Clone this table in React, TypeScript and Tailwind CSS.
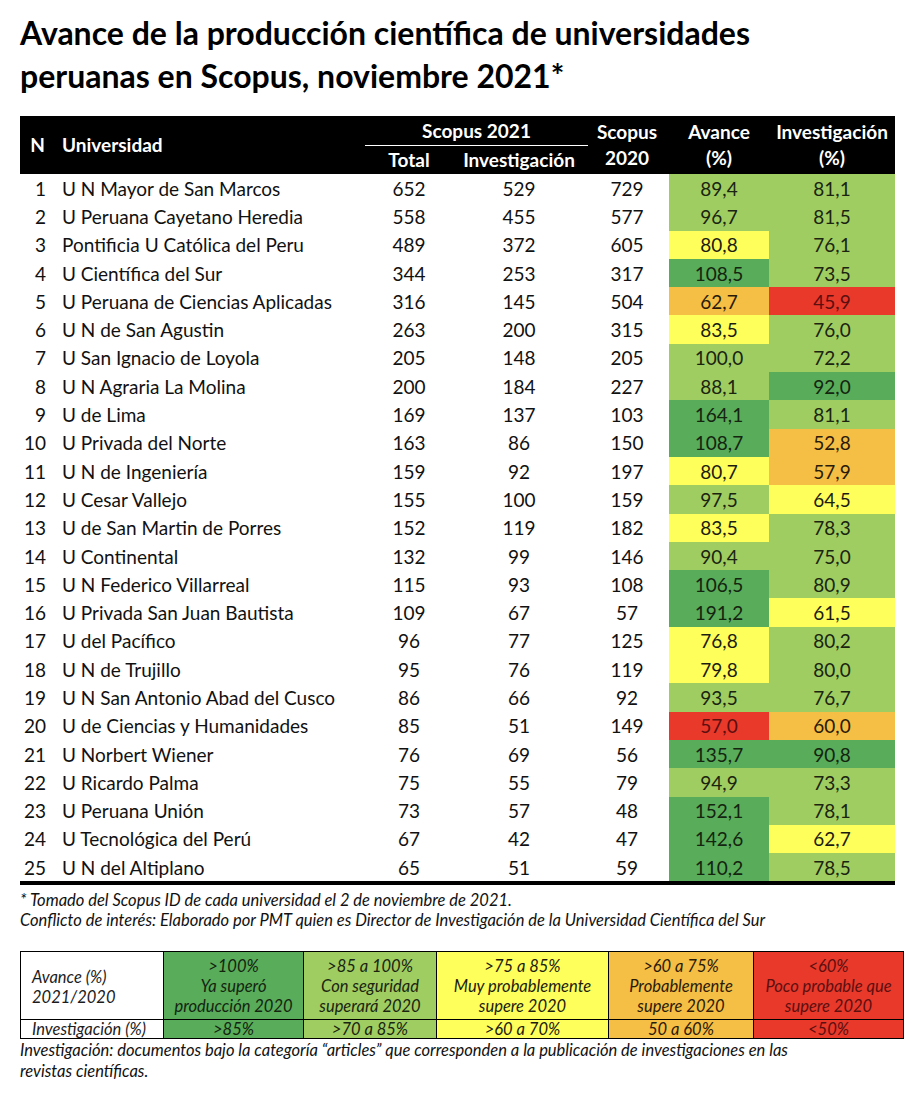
import React from 'react';

type Tone = 'dg' | 'lg' | 'y' | 'o' | 'r';

type Row = {
    n: number;
    name: string;
    total: number;
    inv: number;
    s2020: number;
    avance: string;
    avTone: Tone;
    pct: string;
    pctTone: Tone;
};

const toneClass: Record<Tone, string> = {
    dg: 'bg-[#58ac5a] text-[#14240f]',
    lg: 'bg-[#9fcd62] text-[#1a2410]',
    y: 'bg-[#ffff5c] text-[#1c1c10]',
    o: 'bg-[#f5be45] text-[#2a1a08]',
    r: 'bg-[#e8392b] text-[#5c0f0f]',
};

const rows: Row[] = [
    { n: 1, name: 'U N Mayor de San Marcos', total: 652, inv: 529, s2020: 729, avance: '89,4', avTone: 'lg', pct: '81,1', pctTone: 'lg' },
    { n: 2, name: 'U Peruana Cayetano Heredia', total: 558, inv: 455, s2020: 577, avance: '96,7', avTone: 'lg', pct: '81,5', pctTone: 'lg' },
    { n: 3, name: 'Pontificia U Católica del Peru', total: 489, inv: 372, s2020: 605, avance: '80,8', avTone: 'y', pct: '76,1', pctTone: 'lg' },
    { n: 4, name: 'U Científica del Sur', total: 344, inv: 253, s2020: 317, avance: '108,5', avTone: 'dg', pct: '73,5', pctTone: 'lg' },
    { n: 5, name: 'U Peruana de Ciencias Aplicadas', total: 316, inv: 145, s2020: 504, avance: '62,7', avTone: 'o', pct: '45,9', pctTone: 'r' },
    { n: 6, name: 'U N de San Agustin', total: 263, inv: 200, s2020: 315, avance: '83,5', avTone: 'y', pct: '76,0', pctTone: 'lg' },
    { n: 7, name: 'U San Ignacio de Loyola', total: 205, inv: 148, s2020: 205, avance: '100,0', avTone: 'lg', pct: '72,2', pctTone: 'lg' },
    { n: 8, name: 'U N Agraria La Molina', total: 200, inv: 184, s2020: 227, avance: '88,1', avTone: 'lg', pct: '92,0', pctTone: 'dg' },
    { n: 9, name: 'U de Lima', total: 169, inv: 137, s2020: 103, avance: '164,1', avTone: 'dg', pct: '81,1', pctTone: 'lg' },
    { n: 10, name: 'U Privada del Norte', total: 163, inv: 86, s2020: 150, avance: '108,7', avTone: 'dg', pct: '52,8', pctTone: 'o' },
    { n: 11, name: 'U N de Ingeniería', total: 159, inv: 92, s2020: 197, avance: '80,7', avTone: 'y', pct: '57,9', pctTone: 'o' },
    { n: 12, name: 'U Cesar Vallejo', total: 155, inv: 100, s2020: 159, avance: '97,5', avTone: 'lg', pct: '64,5', pctTone: 'y' },
    { n: 13, name: 'U de San Martin de Porres', total: 152, inv: 119, s2020: 182, avance: '83,5', avTone: 'y', pct: '78,3', pctTone: 'lg' },
    { n: 14, name: 'U Continental', total: 132, inv: 99, s2020: 146, avance: '90,4', avTone: 'lg', pct: '75,0', pctTone: 'lg' },
    { n: 15, name: 'U N Federico Villarreal', total: 115, inv: 93, s2020: 108, avance: '106,5', avTone: 'dg', pct: '80,9', pctTone: 'lg' },
    { n: 16, name: 'U Privada San Juan Bautista', total: 109, inv: 67, s2020: 57, avance: '191,2', avTone: 'dg', pct: '61,5', pctTone: 'y' },
    { n: 17, name: 'U del Pacífico', total: 96, inv: 77, s2020: 125, avance: '76,8', avTone: 'y', pct: '80,2', pctTone: 'lg' },
    { n: 18, name: 'U N de Trujillo', total: 95, inv: 76, s2020: 119, avance: '79,8', avTone: 'y', pct: '80,0', pctTone: 'lg' },
    { n: 19, name: 'U N San Antonio Abad del Cusco', total: 86, inv: 66, s2020: 92, avance: '93,5', avTone: 'lg', pct: '76,7', pctTone: 'lg' },
    { n: 20, name: 'U de Ciencias y Humanidades', total: 85, inv: 51, s2020: 149, avance: '57,0', avTone: 'r', pct: '60,0', pctTone: 'o' },
    { n: 21, name: 'U Norbert Wiener', total: 76, inv: 69, s2020: 56, avance: '135,7', avTone: 'dg', pct: '90,8', pctTone: 'dg' },
    { n: 22, name: 'U Ricardo Palma', total: 75, inv: 55, s2020: 79, avance: '94,9', avTone: 'lg', pct: '73,3', pctTone: 'lg' },
    { n: 23, name: 'U Peruana Unión', total: 73, inv: 57, s2020: 48, avance: '152,1', avTone: 'dg', pct: '78,1', pctTone: 'lg' },
    { n: 24, name: 'U Tecnológica del Perú', total: 67, inv: 42, s2020: 47, avance: '142,6', avTone: 'dg', pct: '62,7', pctTone: 'y' },
    { n: 25, name: 'U N del Altiplano', total: 65, inv: 51, s2020: 59, avance: '110,2', avTone: 'dg', pct: '78,5', pctTone: 'lg' },
];

const cols = 'grid grid-cols-[30px_328px_62px_158px_58px_13px_100px_126px]';

const legend: { tone: Tone; lines: string[]; inv: string; w: string }[] = [
    { tone: 'dg', lines: ['>100%', 'Ya superó', 'producción 2020'], inv: '>85%', w: 'w-[140px]' },
    { tone: 'lg', lines: ['>85 a 100%', 'Con seguridad', 'superará 2020'], inv: '>70 a 85%', w: 'w-[133px]' },
    { tone: 'y', lines: ['>75 a 85%', 'Muy probablemente', 'supere 2020'], inv: '>60 a 70%', w: 'w-[172px]' },
    { tone: 'o', lines: ['>60 a 75%', 'Probablemente', 'supere 2020'], inv: '50 a 60%', w: 'w-[145px]' },
    { tone: 'r', lines: ['<60%', 'Poco probable que', 'supere 2020'], inv: '<50%', w: 'w-[150px]' },
];

function TableHeader() {
    return (
        <div className={`${cols} grid-rows-[30px_28px] h-[58px] bg-black text-white font-bold text-[19px] leading-[26px]`}>
            <div className="row-span-2 flex items-center justify-end pr-[5px]">N</div>
            <div className="row-span-2 flex items-center pl-[12px]">Universidad</div>
            <div className="col-span-2 flex items-center justify-center">
                <div className="ml-[-13px] mr-[10px] w-[223px] h-[30px] border-b border-white flex items-center justify-center">
                    Scopus 2021
                </div>
            </div>
            <div className="row-span-2 flex flex-col items-center justify-center">
                <span>Scopus</span>
                <span>2020</span>
            </div>
            <div className="row-span-2" />
            <div className="row-span-2 flex flex-col items-center justify-center">
                <span>Avance</span>
                <span>(%)</span>
            </div>
            <div className="row-span-2 flex flex-col items-center justify-center">
                <span>Investigación</span>
                <span>(%)</span>
            </div>
            <div className="flex items-center justify-center">Total</div>
            <div className="flex items-center justify-center">Investigación</div>
        </div>
    );
}

function TableRow({ row }: { row: Row }) {
    return (
        <div className={`${cols} h-[28.3px] text-[19px] leading-none text-[#111]`}>
            <div className="flex items-center justify-end pr-[4px]">{row.n}</div>
            <div className="flex items-center pl-[12px] whitespace-nowrap">{row.name}</div>
            <div className="flex items-center justify-center">{row.total}</div>
            <div className="flex items-center justify-center">{row.inv}</div>
            <div className="flex items-center justify-center">{row.s2020}</div>
            <div />
            <div className={`flex items-center justify-center ${toneClass[row.avTone]}`}>{row.avance}</div>
            <div className={`flex items-center justify-center ${toneClass[row.pctTone]}`}>{row.pct}</div>
        </div>
    );
}

function Legend() {
    return (
        <div className="w-[884px] border border-black italic text-[16.5px] leading-[20px] text-[#1c1c1c]">
            <div className="flex h-[68px] border-b border-black">
                <div className="w-[143px] border-r border-black flex flex-col justify-center pl-[11px] pt-[2px]">
                    <span>Avance (%)</span>
                    <span>2021/2020</span>
                </div>
                {legend.map((l, i) => (
                    <div
                        key={l.inv}
                        className={`${l.w} ${i < legend.length - 1 ? 'border-r border-black' : 'flex-1'} flex flex-col items-center justify-center ${toneClass[l.tone]}`}
                    >
                        {l.lines.map((t) => <span key={t}>{t}</span>)}
                    </div>
                ))}
            </div>
            <div className="flex h-[18px] leading-[18px]">
                <div className="w-[143px] border-r border-black pl-[11px] whitespace-nowrap">Investigación (%)</div>
                {legend.map((l, i) => (
                    <div
                        key={l.inv}
                        className={`${l.w} ${i < legend.length - 1 ? 'border-r border-black' : 'flex-1'} text-center ${toneClass[l.tone]}`}
                    >
                        {l.inv}
                    </div>
                ))}
            </div>
        </div>
    );
}

export default function App() {
    return (
        <div className="w-[916px] h-[1094px] bg-white text-black font-['Lato','Liberation_Sans',sans-serif] overflow-hidden">
            <div className="pl-[20px] pt-[11px]">
                <h1 className="text-[32px] leading-[43px] font-bold">
                    Avance de la producción científica de universidades
                    <br />
                    peruanas en Scopus, noviembre 2021*
                </h1>
            </div>

            <div className="ml-[20px] mt-[19px] w-[875px]">
                <TableHeader />
                {rows.map((r) => <TableRow key={r.n} row={r} />)}
                <div className="w-[875px] h-[4px] bg-black" />
            </div>

            <div className="pl-[20px] pt-[5px] italic text-[16.5px] leading-[20px] text-[#111]">
                <p>* Tomado del Scopus ID de cada universidad el 2 de noviembre de 2021.</p>
                <p>Conflicto de interés: Elaborado por PMT quien es Director de Investigación de la Universidad Científica del Sur</p>
            </div>

            <div className="ml-[20px] mt-[21px]">
                <Legend />
            </div>

            <div className="pl-[20px] pt-[1px] italic text-[16.5px] leading-[21px] text-[#111]">
                <p>Investigación: documentos bajo la categoría “articles” que corresponden a la publicación de investigaciones en las</p>
                <p>revistas científicas.</p>
            </div>
        </div>
    );
}
